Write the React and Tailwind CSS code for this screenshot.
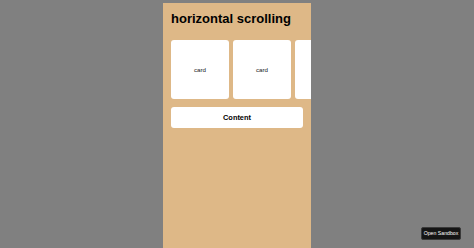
export default function App() {
  const cards = [1, 2, 3, 4, 5];
  return (
    <div
      className="relative w-[474px] h-[248px] bg-[#808080] flex justify-center pt-[3px] overflow-hidden"
      style={{ fontFamily: '"Liberation Sans", Arial, sans-serif' }}
    >
      <div className="w-[148px] h-full bg-[#deb887] pl-[8px] pt-[8px] flex flex-col">
        <h1 className="text-[13px] leading-[16px] font-bold text-black m-0">horizontal scrolling</h1>
        <div className="flex gap-[4px] overflow-hidden mt-[13px]">
          {cards.map((c) => (
            <div
              key={c}
              className="w-[58px] h-[59px] shrink-0 bg-white rounded-[3px] flex items-center justify-center text-[6.2px] text-[#222]"
            >
              card
            </div>
          ))}
        </div>
        <div className="mt-[8px] mr-[8px] h-[21px] bg-white rounded-[3px] flex items-center justify-center text-[7.4px] font-bold text-black">
          Content
        </div>
      </div>
      <div className="absolute right-[13px] bottom-[8px] w-[40px] h-[13px] bg-[#151515] border border-[#3a3a3a] rounded-[2px] flex items-center justify-center text-[5.2px] text-white whitespace-nowrap">
        Open Sandbox
      </div>
    </div>
  );
}
